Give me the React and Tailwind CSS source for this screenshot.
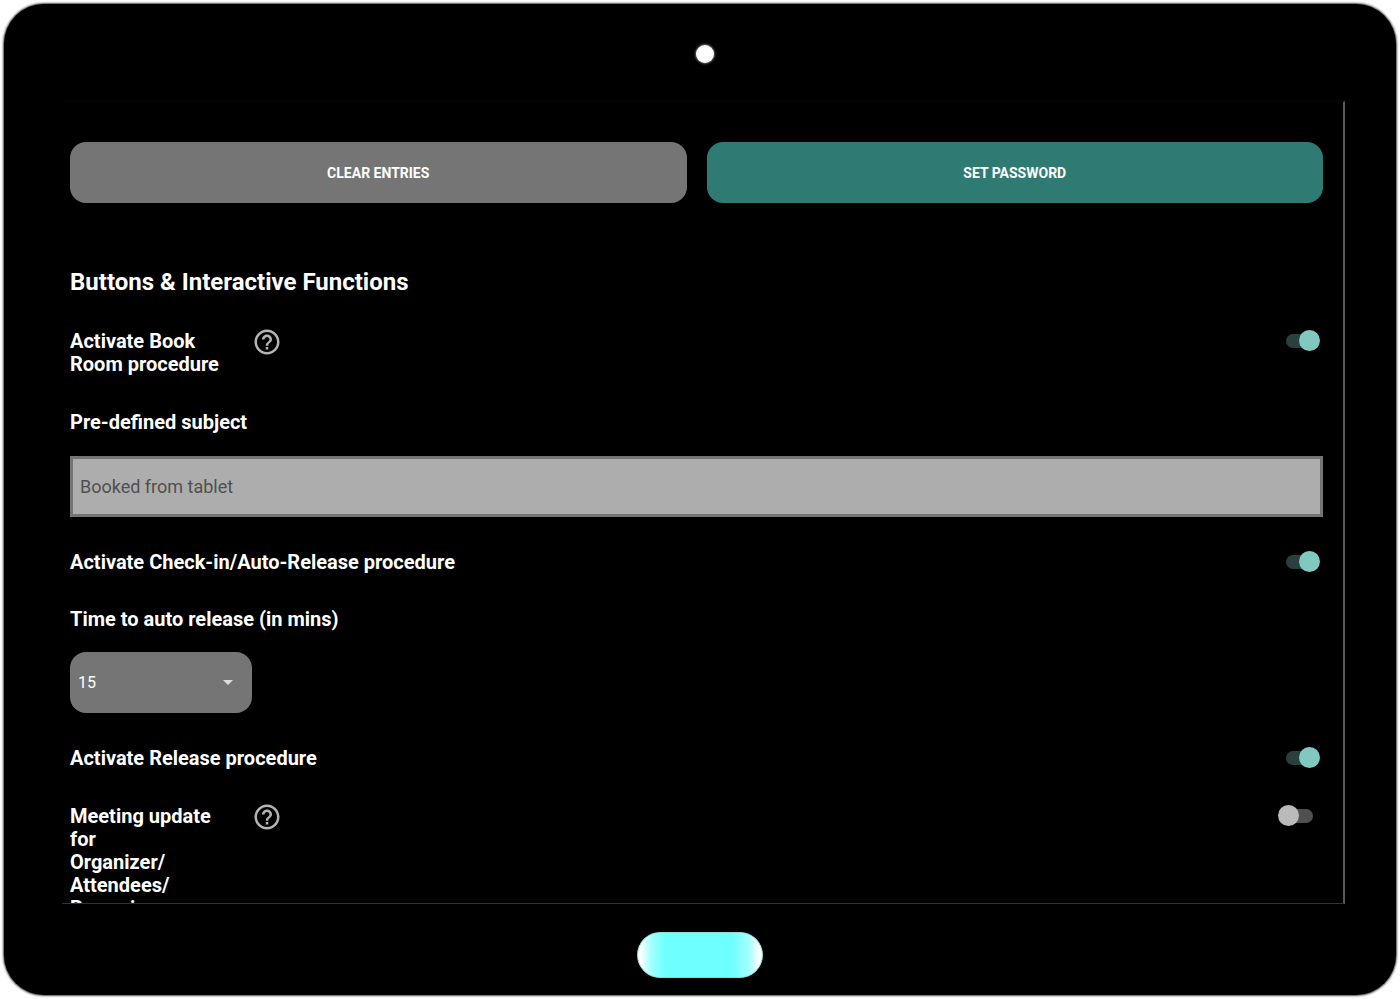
import React, { useState } from 'react';

// Section label
function Label({ children, className = '', ...props }) {
  return (
    <label className={`text-xl leading-[23px] font-bold text-white ${className}`} {...props}>
      {children}
    </label>
  );
}

// Help button
function Help({ topic }) {
  return (
    <button type="button" aria-label={`Help: ${topic}`} className="-mt-[3px] ml-4 shrink-0">
      <svg viewBox="0 0 24 24" className="size-[30px] fill-[#b4b4b4]">
        <path d="M11 18h2v-2h-2v2zm1-16C6.48 2 2 6.48 2 12s4.48 10 10 10 10-4.48 10-10S17.52 2 12 2zm0 18c-4.41 0-8-3.59-8-8s3.59-8 8-8 8 3.59 8 8-3.59 8-8 8zm0-14c-2.21 0-4 1.79-4 4h2c0-1.1.9-2 2-2s2 .9 2 2c0 2-3 1.75-3 5h2c0-2.25 3-2.5 3-5 0-2.21-1.79-4-4-4z" />
      </svg>
    </button>
  );
}

function Toggle({ id, defaultChecked }) {
  return (
    <span className="relative ml-auto flex h-[21px] w-[42px] shrink-0 items-center">
      <input
        id={id}
        type="checkbox"
        defaultChecked={defaultChecked}
        className="peer absolute inset-0 z-10 cursor-pointer opacity-0"
      />
      <span className="ml-2 h-3.5 w-[27px] rounded-full bg-[#505050] peer-checked:bg-[#2a403e]" />
      <span className="absolute left-0 size-[21px] rounded-full bg-[#bababa] peer-checked:left-[21px] peer-checked:bg-[#80c8c0]" />
    </span>
  );
}

function SettingRow({ id, label, help, defaultChecked = false, className = '' }) {
  return (
    <div className={`flex items-start pr-[3px] ${className}`}>
      <Label htmlFor={id} className={help ? 'w-[166px] whitespace-pre-line' : ''}>
        {label}
      </Label>
      {help && <Help topic={label} />}
      <Toggle id={id} defaultChecked={defaultChecked} />
    </div>
  );
}

function App() {
  const [subject, setSubject] = useState('Booked from tablet');
  const [minutes, setMinutes] = useState('15');

  return (
    <div className="h-screen bg-white p-1 font-['Roboto',sans-serif]">
      <div className="flex h-full flex-col rounded-[40px] bg-black px-[51px] shadow-[0_0_2px_1px_rgba(0,0,0,0.7)]">
        <header className="flex h-[97px] shrink-0 justify-center pt-[41px] pl-2.5">
          <span className="size-[18px] rounded-full bg-white shadow-[0_0_2px_1px_rgba(255,255,255,0.4)]" />
        </header>

        <main className="ml-[7px] min-h-0 flex-1 overflow-y-auto border-t border-r-2 border-b border-t-[#060606] border-r-[#585858] border-b-[#333333] pt-10 pr-5 pl-2 [scrollbar-width:none]">
          <div className="grid grid-cols-2 gap-5">
            <button
              type="button"
              onClick={() => setSubject('')}
              className="h-[61px] rounded-2xl bg-[#757575] text-sm font-bold text-white"
            >
              CLEAR ENTRIES
            </button>
            <button type="button" className="h-[61px] rounded-2xl bg-[#2f7b73] text-sm font-bold text-white">
              SET PASSWORD
            </button>
          </div>

          <h1 className="mt-[65px] text-2xl leading-7 font-bold text-white">Buttons &amp; Interactive Functions</h1>

          <SettingRow id="book" label="Activate Book Room procedure" help defaultChecked className="mt-[34px]" />

          <div className="mt-[35px] flex flex-col gap-[22px]">
            <Label htmlFor="subject">Pre-defined subject</Label>
            <input
              id="subject"
              type="text"
              value={subject}
              onChange={(e) => setSubject(e.target.value)}
              className="h-[61px] w-full border-3 border-[#757575] bg-[#adadad] px-[7px] text-lg text-[#505050]"
            />
          </div>

          <SettingRow id="checkin" label="Activate Check-in/Auto-Release procedure" defaultChecked className="mt-[34px]" />

          <div className="mt-[34px] flex flex-col items-start gap-[21px]">
            <Label htmlFor="minutes">Time to auto release (in mins)</Label>
            <div className="relative">
              <select
                id="minutes"
                value={minutes}
                onChange={(e) => setMinutes(e.target.value)}
                className="h-[61px] w-[182px] appearance-none rounded-2xl bg-[#757575] px-2 text-base text-white"
              >
                <option>5</option>
                <option>10</option>
                <option>15</option>
                <option>30</option>
              </select>
              <svg viewBox="0 0 10 5" className="pointer-events-none absolute top-7 right-[19px] h-[5px] w-2.5 fill-[#dddddd]">
                <path d="M0 0h10L5 5z" />
              </svg>
            </div>
          </div>

          <SettingRow id="release" label="Activate Release procedure" defaultChecked className="mt-[34px]" />

          <SettingRow
            id="update"
            label={'Meeting update for\nOrganizer/\nAttendees/\nRecurring'}
            help
            className="mt-[35px]"
          />
        </main>

        <footer className="flex h-[91px] shrink-0 items-center justify-center pt-[11px]">
          <button
            type="button"
            aria-label="Home"
            className="h-[46px] w-[126px] rounded-full border border-[#8fd8d2] bg-[#6effff] bg-[linear-gradient(to_right,#ffffff_2%,#a8ffff_10%,#6effff_22%,#6effff_76%,#a8ffff_90%,#ffffff_98%)]"
          />
        </footer>
      </div>
    </div>
  );
}

export default App;
